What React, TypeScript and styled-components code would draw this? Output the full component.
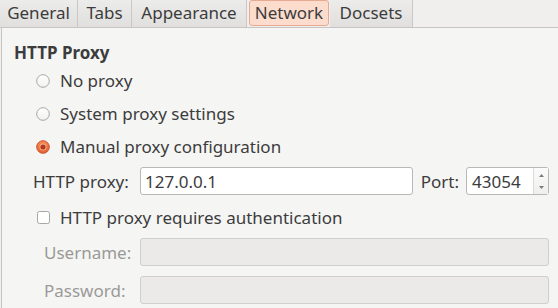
import React from "react"
import styled, { createGlobalStyle } from "styled-components"

const GlobalStyle = createGlobalStyle`
  html, body {
    margin: 0;
    padding: 0;
    background: #f2f1f0;
  }
  body {
    font-family: "Noto Sans", "Liberation Sans", sans-serif;
    font-size: 17px;
    color: #3c3c3c;
  }
`

const components = {
  Window: styled.div`
    width: 558px;
    height: 308px;
    overflow: hidden;
    background: #f2f1f0;
    display: flex;
    flex-direction: column;
  `,
  TabBar: styled.div`
    display: flex;
    align-items: flex-end;
    height: 28px;
    box-sizing: border-box;
    border-bottom: 1px solid #c6c5c3;
    background: #f0efed;
  `,
  Tab: styled.div<{ $width: number; $active?: boolean }>`
    width: ${p => p.$width}px;
    height: ${p => (p.$active ? 26 : 27)}px;
    box-sizing: border-box;
    display: flex;
    align-items: center;
    justify-content: center;
    line-height: 1;
    color: #3c3c3c;
    margin-left: ${p => (p.$active ? 2 : 0)}px;
    margin-right: ${p => (p.$active ? 1 : 0)}px;
    align-self: flex-start;
    ${p =>
      p.$active
        ? `
      background: #fcdccd;
      border: 1px solid #e9a990;
      border-radius: 3px;
      padding-bottom: 2px;
    `
        : `
      background: linear-gradient(#ececeb, #e0dfdd);
      border-right: 1px solid #c9c8c6;
      padding-bottom: 2px;
    `}
  `,
  Panel: styled.div`
    flex: 1;
    margin-left: 1px;
    border-left: 1px solid #c6c5c3;
    background: #f5f5f4;
    padding: 13px 0 0 0;
    display: flex;
    flex-direction: column;
  `,
  Heading: styled.div`
    height: 23px;
    line-height: 23px;
    padding-left: 12px;
    font-weight: bold;
    color: #3c3c3c;
  `,
  OptionRow: styled.div<{ $height: number; $top?: number }>`
    height: ${p => p.$height}px;
    margin-top: ${p => p.$top ?? 0}px;
    display: flex;
    align-items: center;
    padding-left: 34px;
    gap: 10px;
    color: #3c3c3c;
  `,
  Mark: styled.svg<{ $size: number }>`
    width: ${p => p.$size}px;
    height: ${p => p.$size}px;
    flex: none;
  `,
  FormRow: styled.div<{ $indent: number; $top: number }>`
    display: flex;
    align-items: center;
    height: 28px;
    margin-top: ${p => p.$top}px;
    padding-left: ${p => p.$indent}px;
    padding-right: 9px;
  `,
  Label: styled.div<{ $width: number; $disabled?: boolean }>`
    width: ${p => p.$width}px;
    flex: none;
    color: ${p => (p.$disabled ? "#9b9a98" : "#3c3c3c")};
  `,
  Input: styled.div<{ $disabled?: boolean; $grow?: boolean }>`
    height: 28px;
    box-sizing: border-box;
    ${p => (p.$grow ? "flex: 1;" : "")}
    border: 1px solid ${p => (p.$disabled ? "#d0cfcd" : "#b9b8b6")};
    border-radius: 3px;
    background: ${p => (p.$disabled ? "#ebeae8" : "#ffffff")};
    display: flex;
    align-items: center;
    padding-left: 4px;
    color: #3c3c3c;
  `,
  PortLabel: styled.div`
    margin: 0 7px 0 8px;
    color: #3c3c3c;
  `,
  Spin: styled.div`
    width: 83px;
    height: 28px;
    box-sizing: border-box;
    border: 1px solid #b9b8b6;
    border-radius: 3px;
    background: #ffffff;
    display: flex;
    align-items: stretch;
  `,
  SpinValue: styled.div`
    flex: 1;
    display: flex;
    align-items: center;
    padding-left: 5px;
  `,
  SpinArrows: styled.div`
    width: 15px;
    border-left: 1px solid #dcdbd9;
    background: linear-gradient(#fbfbfb, #efefee);
    display: flex;
    flex-direction: column;
    align-items: center;
    justify-content: space-between;
    padding: 6px 0 5px;
    box-sizing: border-box;
  `,
}

const RadioOff = () => (
  <components.Mark $size={14} viewBox="0 0 14 14">
    <defs>
      <linearGradient id="roff" x1="0" y1="0" x2="0" y2="1">
        <stop offset="0" stopColor="#ffffff" />
        <stop offset="1" stopColor="#f1f1f0" />
      </linearGradient>
    </defs>
    <circle cx="7" cy="7" r="6.3" fill="url(#roff)" stroke="#a8a7a5" strokeWidth="1" />
  </components.Mark>
)

const RadioOn = () => (
  <components.Mark $size={14} viewBox="0 0 14 14">
    <defs>
      <linearGradient id="ron" x1="0" y1="0" x2="0" y2="1">
        <stop offset="0" stopColor="#f6895a" />
        <stop offset="1" stopColor="#e4602f" />
      </linearGradient>
    </defs>
    <circle cx="7" cy="7" r="6.3" fill="url(#ron)" stroke="#c9542a" strokeWidth="1" />
    <circle cx="7" cy="7" r="3.5" fill="#f9b294" />
    <circle cx="7" cy="7" r="2.6" fill="#b2391a" />
  </components.Mark>
)

const CheckOff = () => (
  <components.Mark $size={13} viewBox="0 0 13 13" style={{ marginLeft: 1, marginRight: 0 }}>
    <rect x="0.5" y="0.5" width="12" height="12" rx="2" fill="#ffffff" stroke="#a8a7a5" strokeWidth="1" />
  </components.Mark>
)

const Arrow = ({ up }: { up?: boolean }) => (
  <svg width="5" height="3" viewBox="0 0 5 3">
    <path d={up ? "M0 3 L2.5 0 L5 3 Z" : "M0 0 L2.5 3 L5 0 Z"} fill="#7d7c7a" />
  </svg>
)

const tabs = [
  { name: "General", width: 78 },
  { name: "Tabs", width: 54 },
  { name: "Appearance", width: 115 },
  { name: "Network", width: 80, active: true },
  { name: "Docsets", width: 83 },
]

export default function App() {
  return (
    <components.Window>
      <GlobalStyle />
      <components.TabBar>
        {tabs.map(t => (
          <components.Tab key={t.name} $width={t.width} $active={t.active}>
            {t.name}
          </components.Tab>
        ))}
      </components.TabBar>
      <components.Panel>
        <components.Heading>HTTP Proxy</components.Heading>
        <components.OptionRow $height={33}>
          <RadioOff />
          No proxy
        </components.OptionRow>
        <components.OptionRow $height={33}>
          <RadioOff />
          System proxy settings
        </components.OptionRow>
        <components.OptionRow $height={33}>
          <RadioOn />
          Manual proxy configuration
        </components.OptionRow>
        <components.FormRow $indent={31} $top={4}>
          <components.Label $width={107}>HTTP proxy:</components.Label>
          <components.Input $grow>127.0.0.1</components.Input>
          <components.PortLabel>Port:</components.PortLabel>
          <components.Spin>
            <components.SpinValue>43054</components.SpinValue>
            <components.SpinArrows>
              <Arrow up />
              <Arrow />
            </components.SpinArrows>
          </components.Spin>
        </components.FormRow>
        <components.OptionRow $height={32} $top={6}>
          <CheckOff />
          HTTP proxy requires authentication
        </components.OptionRow>
        <components.FormRow $indent={42} $top={5}>
          <components.Label $width={96} $disabled>Username:</components.Label>
          <components.Input $grow $disabled />
        </components.FormRow>
        <components.FormRow $indent={42} $top={10}>
          <components.Label $width={96} $disabled>Password:</components.Label>
          <components.Input $grow $disabled />
        </components.FormRow>
      </components.Panel>
    </components.Window>
  )
}
